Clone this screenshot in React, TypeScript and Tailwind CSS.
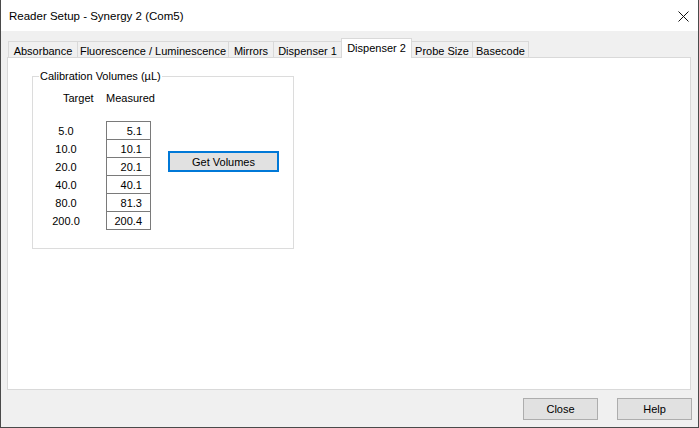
import React from "react";

const tabs = [
  { label: "Absorbance", w: "w-[70px]" },
  { label: "Fluorescence / Luminescence", w: "w-[152px]" },
  { label: "Mirrors", w: "w-[46px]" },
  { label: "Dispenser 1", w: "w-[69px]" },
  { label: "Dispenser 2", w: "w-[71px]", selected: true },
  { label: "Probe Size", w: "w-[62px]" },
  { label: "Basecode", w: "w-[57px]" },
];

const rows = [
  ["5.0", "5.1"],
  ["10.0", "10.1"],
  ["20.0", "20.1"],
  ["40.0", "40.1"],
  ["80.0", "81.3"],
  ["200.0", "200.4"],
];

export default function App() {
  return (
    <div className="w-[699px] h-[428px] flex flex-col border-x border-b border-[#4a4a4a] bg-[#f0f0f0] text-black font-['Liberation_Sans',Arial,sans-serif] text-[11px] overflow-hidden">
      {/* Title bar */}
      <div className="h-[31px] shrink-0 bg-white flex items-center justify-between pl-[8px] pr-[9px]">
        <span className="text-[11.5px] leading-[14px] font-['Liberation_Sans',Arial,sans-serif] mt-[1px]">
          Reader Setup - Synergy 2 (Com5)
        </span>
        <svg width="11" height="11" viewBox="0 0 11 11" className="mt-[2px]">
          <path d="M0.5 0.5 L10.5 10.5 M10.5 0.5 L0.5 10.5" stroke="#111" strokeWidth="1" fill="none" />
        </svg>
      </div>

      {/* Body */}
      <div className="flex-1 flex flex-col pt-[7px]">
        {/* Tab strip */}
        <div className="flex items-end h-[19px] ml-[7px]">
          {tabs.map((t, i) =>
            t.selected ? (
              <div
                key={t.label}
                className={`${t.w} h-[20px] -ml-px mb-[-1px] relative z-10 bg-white border-x border-t border-[#d9d9d9] flex justify-center pt-[3px] leading-[13px]`}
              >
                {t.label}
              </div>
            ) : (
              <div
                key={t.label}
                className={`${t.w} h-[16px] ${i === 0 ? "" : "-ml-px"} bg-[#f0f0f0] border-x border-t border-[#d9d9d9] flex justify-center pt-[3px] leading-[13px]`}
              >
                {t.label}
              </div>
            )
          )}
        </div>

        {/* Panel */}
        <div className="ml-[6px] w-[684px] h-[333px] bg-white border border-[#d9d9d9] pt-[18px] pl-[24px]">
          {/* Group box */}
          <div className="relative w-[262px] h-[173px] border border-[#dcdcdc] pt-[15px]">
            <span className="absolute -top-[8px] left-[6px] bg-white px-px leading-[14px]">
              Calibration Volumes (µL)
            </span>
            <div className="flex leading-[13px] pl-[30px]">
              <span className="w-[43px]">Target</span>
              <span>Measured</span>
            </div>
            <div className="flex mt-[16px] pl-[10px]">
              <div className="w-[46px] flex flex-col">
                {rows.map(([t]) => (
                  <div key={t} className="h-[18px] pt-[4px] leading-[13px] text-center">
                    {t}
                  </div>
                ))}
              </div>
              <div className="ml-[17px] w-[45px] border-x border-b border-[#7a7a7a] flex flex-col">
                {rows.map(([t, m]) => (
                  <div key={t} className="h-[18px] border-t border-[#7a7a7a] pt-[3px] leading-[13px] text-right pr-[8px]">
                    {m}
                  </div>
                ))}
              </div>
              <div className="ml-[17px] mt-[30px] w-[111px] h-[21px] border-2 border-[#0078d7] bg-[#e1e1e1] flex items-center justify-center pt-[2px] leading-[13px]">
                Get Volumes
              </div>
            </div>
          </div>
        </div>

        {/* Bottom buttons */}
        <div className="flex justify-end gap-[19px] mt-[8px] mr-[6px]">
          <div className="w-[75px] h-[22px] border border-[#adadad] bg-[#e1e1e1] flex items-center justify-center leading-[13px]">
            Close
          </div>
          <div className="w-[75px] h-[22px] border border-[#adadad] bg-[#e1e1e1] flex items-center justify-center leading-[13px]">
            Help
          </div>
        </div>
      </div>
    </div>
  );
}
